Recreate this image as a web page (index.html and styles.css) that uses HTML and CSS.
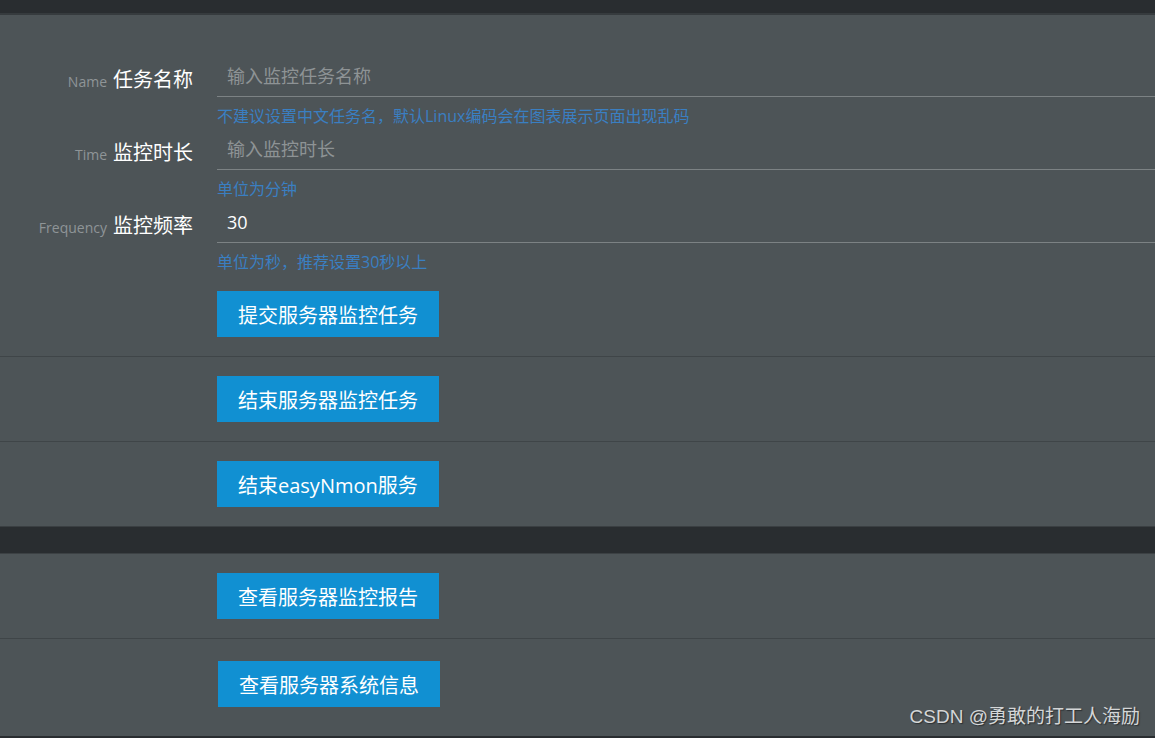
FILE: index.html
```html
<!DOCTYPE html>
<html lang="zh-CN">
<head>
<meta charset="utf-8">
<title>easyNmon</title>
<link rel="stylesheet" href="styles.css">
</head>
<body>
<div class="topbar"></div>
<div class="panel panel-first">
  <div class="section section-form">
    <div class="field">
      <div class="label"><span class="en">Name</span><span class="zh">任务名称</span></div>
      <input class="input" type="text" placeholder="输入监控任务名称">
      <div class="help">不建议设置中文任务名，默认Linux编码会在图表展示页面出现乱码</div>
    </div>
    <div class="field">
      <div class="label"><span class="en">Time</span><span class="zh">监控时长</span></div>
      <input class="input" type="text" placeholder="输入监控时长">
      <div class="help">单位为分钟</div>
    </div>
    <div class="field">
      <div class="label"><span class="en">Frequency</span><span class="zh">监控频率</span></div>
      <input class="input" type="text" value="30">
      <div class="help">单位为秒，推荐设置30秒以上</div>
    </div>
    <div class="actions first-action"><button class="btn">提交服务器监控任务</button></div>
  </div>
  <div class="section"><div class="actions"><button class="btn">结束服务器监控任务</button></div></div>
  <div class="section last"><div class="actions"><button class="btn">结束easyNmon服务</button></div></div>
</div>
<div class="gap"></div>
<div class="panel panel-second">
  <div class="section s2a"><div class="actions"><button class="btn">查看服务器监控报告</button></div></div>
  <div class="section s2b last"><div class="actions shift"><button class="btn">查看服务器系统信息</button></div></div>
</div>
<div class="watermark">CSDN @勇敢的打工人海励</div>
</body>
</html>
```
FILE: styles.css
```css
html, body {
  margin: 0;
  padding: 0;
  background: #292d30;
  height: 738px;
  overflow: hidden;
  font-family: "Open Sans", "Noto Sans CJK SC", sans-serif;
}

.topbar {
  height: 13px;
  background: #292d30;
}

.panel {
  background: #4d5457;
}

.panel-first {
  border-top: 2px solid #363b3e;
}

.section {
  padding: 19px 0;
  border-bottom: 1px solid #3f4548;
}

.section.last {
  border-bottom: none;
}

.section-form {
  padding-top: 43px;
}

.field {
  display: grid;
  grid-template-columns: 193px 1fr;
  column-gap: 24px;
}

.label {
  grid-column: 1;
  grid-row: 1;
  display: flex;
  justify-content: flex-end;
  align-items: baseline;
  padding-top: 6px;
  height: 33px;
}

.label .en {
  font-size: 14px;
  color: #8f9597;
  margin-right: 6px;
}

.label .zh {
  font-size: 20px;
  color: #ffffff;
}

.input {
  grid-column: 2;
  grid-row: 1;
  box-sizing: border-box;
  height: 39px;
  width: 100%;
  margin: 0;
  padding: 0 0 2px 10px;
  border: none;
  border-bottom: 1px solid #7c8284;
  background: transparent;
  color: #ffffff;
  font-family: "Open Sans", "Noto Sans CJK SC", sans-serif;
  font-size: 18px;
  outline: none;
}

.input::placeholder {
  color: #8e9395;
}

.help {
  grid-column: 2;
  grid-row: 2;
  height: 34px;
  box-sizing: border-box;
  padding-top: 9px;
  line-height: 20px;
  font-size: 16px;
  color: #3a7fc2;
  white-space: nowrap;
}

.actions {
  padding-left: 217px;
}

.actions.shift {
  padding-left: 218px;
}

.first-action {
  margin-top: 14px;
}

.btn {
  display: block;
  width: 222px;
  height: 46px;
  margin: 0;
  padding: 0 0 0 21px;
  border: none;
  background: #1190d2;
  color: #ffffff;
  font-family: "Open Sans", "Noto Sans CJK SC", sans-serif;
  font-size: 20px;
  text-align: left;
  white-space: nowrap;
  cursor: pointer;
}

.gap {
  height: 26px;
  background: #292d30;
  border-top: 1px solid #3a3f42;
}

.panel-second {
  border-top: 1px solid #3c4144;
}

.s2a {
  padding-top: 19px;
}

.s2b {
  padding-top: 22px;
  padding-bottom: 29px;
}

.watermark {
  position: absolute;
  right: 15px;
  top: 704px;
  font-family: "Liberation Sans", "Noto Sans CJK SC", sans-serif;
  font-size: 19px;
  line-height: 26px;
  color: #d4d6d7;
  text-shadow: 1px 1px 1px #2c3033;
  white-space: nowrap;
}
```
